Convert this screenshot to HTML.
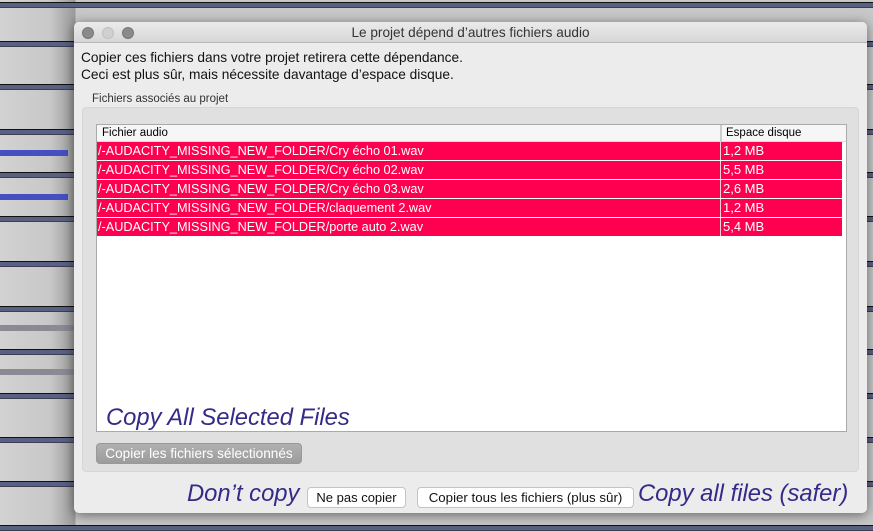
<!DOCTYPE html>
<html><head><meta charset="utf-8"><style>
*{margin:0;padding:0;box-sizing:border-box}
body{width:873px;height:528px;overflow:hidden;position:relative;font-family:"Liberation Sans",sans-serif;background:linear-gradient(90deg,#d2d2d2 0,#c8c8c8 50px,#9a9a9a 75px,#c8c8c8 76px)}
.sep{position:absolute;left:0;width:873px;height:6px;border-top:1px solid #111;background:#5a6080;border-bottom:1px solid #3a3f55}
.wave{position:absolute;height:6px;background:#4450c0}
.dlg{position:absolute;left:74px;top:22px;width:793px;height:491px;background:#ececec;border-radius:5px;box-shadow:0 2px 12px rgba(0,0,0,.5);overflow:hidden}
.tb{height:21px;background:linear-gradient(#ebebeb,#d6d6d6);border-bottom:1px solid #b8b8b8;text-align:center;font-size:13.6px;line-height:21px;color:#333}
.dot{position:absolute;top:5px;width:12px;height:12px;border-radius:50%;background:#8a8a8a;border:1px solid #777}
.t{position:absolute;font-size:13.7px;color:#111;white-space:nowrap}
.grp{position:absolute;left:8px;top:85px;width:777px;height:365px;background:#e0e0e0;border-radius:4px;border:1px solid #d6d6d6}
.tbl{position:absolute;left:22px;top:102px;width:751px;height:308px;background:#fff;border:1px solid #aaa}
.hd{position:absolute;left:0;top:0;width:749px;height:17px;background:#f6f6f6;border-bottom:1px solid #ddd;font-size:11.5px;line-height:17px}
.row{position:absolute;left:0;width:745px;height:18px;background:#ff0050;color:#fff;font-size:12.7px;line-height:18px}
.row span{position:absolute;top:0}
.row .b{left:623px;border-left:1px solid #f8d0dc;padding-left:2px;height:18px;font-size:13px}
.it{position:absolute;font-style:italic;color:#342a88;font-size:23.8px;white-space:nowrap}
.btn{position:absolute;height:21px;background:#fff;border:1px solid #c4c4c4;border-radius:4px;font-size:13px;line-height:19px;text-align:center;color:#111;white-space:nowrap}
</style></head><body>
<div class="sep" style="top:2px"></div>
<div class="sep" style="top:41px"></div>
<div class="sep" style="top:84px"></div>
<div class="sep" style="top:129px"></div>
<div class="sep" style="top:172px"></div>
<div class="sep" style="top:216px"></div>
<div class="sep" style="top:261px"></div>
<div class="sep" style="top:306px"></div>
<div class="sep" style="top:349px"></div>
<div class="sep" style="top:393px"></div>
<div class="sep" style="top:437px"></div>
<div class="sep" style="top:481px"></div>
<div class="sep" style="top:525px"></div>
<div class="wave" style="left:0;top:150px;width:68px"></div>
<div class="wave" style="left:0;top:194px;width:68px"></div>
<div class="wave" style="left:0;top:325px;width:74px;background:#8a8a95"></div>
<div class="wave" style="left:0;top:369px;width:74px;background:#8a8a95"></div>
<div class="dlg">
<div class="tb">Le projet dépend d’autres fichiers audio</div>
<div class="dot" style="left:8px"></div><div class="dot" style="left:28px;background:#d0d0d0;border-color:#c0c0c0"></div><div class="dot" style="left:48px"></div>
<div class="t" style="left:7px;top:28px">Copier ces fichiers dans votre projet retirera cette dépendance.</div>
<div class="t" style="left:7px;top:45px">Ceci est plus sûr, mais nécessite davantage d’espace disque.</div>
<div class="t" style="left:18px;top:71px;font-size:11.5px;color:#333">Fichiers associés au projet</div>
<div class="grp"></div>
<div class="tbl">
<div class="hd"><span style="position:absolute;left:5px">Fichier audio</span><span style="position:absolute;left:623px;border-left:2px solid #ccc;padding-left:4px">Espace disque</span></div>
<div class="row" style="top:17px"><span style="left:1px">/-AUDACITY_MISSING_NEW_FOLDER/Cry écho 01.wav</span><span class="b">1,2 MB</span></div>
<div class="row" style="top:36px"><span style="left:1px">/-AUDACITY_MISSING_NEW_FOLDER/Cry écho 02.wav</span><span class="b">5,5 MB</span></div>
<div class="row" style="top:55px"><span style="left:1px">/-AUDACITY_MISSING_NEW_FOLDER/Cry écho 03.wav</span><span class="b">2,6 MB</span></div>
<div class="row" style="top:74px"><span style="left:1px">/-AUDACITY_MISSING_NEW_FOLDER/claquement 2.wav</span><span class="b">1,2 MB</span></div>
<div class="row" style="top:93px"><span style="left:1px">/-AUDACITY_MISSING_NEW_FOLDER/porte auto 2.wav</span><span class="b">5,4 MB</span></div>
<div class="it" style="left:9px;top:279px">Copy All Selected Files</div>
</div>
<div class="btn" style="left:22px;top:421px;width:206px;background:linear-gradient(#b0b0b0,#9c9c9c);border-color:#999;color:#fff;font-size:13.6px">Copier les fichiers sélectionnés</div>
<div class="it" style="left:113px;top:458px">Don’t copy</div>
<div class="btn" style="left:233px;top:465px;width:99px">Ne pas copier</div>
<div class="btn" style="left:343px;top:465px;width:217px;font-size:13.3px">Copier tous les fichiers (plus sûr)</div>
<div class="it" style="left:564px;top:458px">Copy all files (safer)</div>
</div>
</body></html>
